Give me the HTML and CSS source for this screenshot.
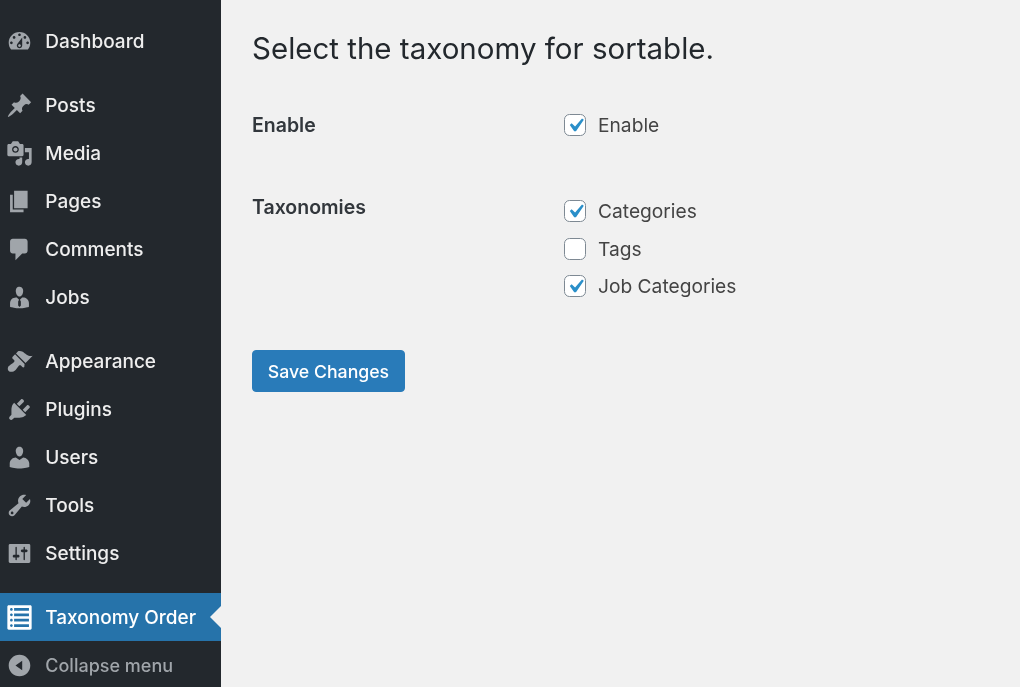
FILE: index.html
```html
<!DOCTYPE html>
<html lang="en">
<head>
<meta charset="utf-8">
<title>Taxonomy Order</title>
<link rel="stylesheet" href="styles.css">
</head>
<body>
<div class="admin">
  <nav class="sidebar">
    <a class="item group-end"><svg class="icon" viewBox="0 0 20 20"><path d="M3.76 16h12.48c1.1-1.37 1.76-3.11 1.76-5 0-4.42-3.58-8-8-8s-8 3.58-8 8c0 1.89.66 3.63 1.76 5zM10 4c.55 0 1 .45 1 1s-.45 1-1 1-1-.45-1-1 .45-1 1-1zM6 6c.55 0 1 .45 1 1s-.45 1-1 1-1-.45-1-1 .45-1 1-1zm8 0c.55 0 1 .45 1 1s-.45 1-1 1-1-.45-1-1 .45-1 1-1zm-5.37 5.55L12 7v6c0 1.1-.9 2-2 2s-2-.9-2-2c0-.57.24-1.08.63-1.45zM4 10c.55 0 1 .45 1 1s-.45 1-1 1-1-.45-1-1 .45-1 1-1zm12 0c.55 0 1 .45 1 1s-.45 1-1 1-1-.45-1-1 .45-1 1-1zm-5 3c0-.55-.45-1-1-1s-1 .45-1 1 .45 1 1 1 1-.45 1-1z"/></svg><span>Dashboard</span></a>
    <a class="item"><svg class="icon" viewBox="0 0 20 20"><path d="M10.44 3.02l1.82-1.82 6.36 6.35-1.83 1.82c-1.05-.68-2.48-.57-3.41.36l-.75.75c-.92.93-1.04 2.35-.35 3.41l-1.83 1.82-2.41-2.41-2.8 2.79c-.42.42-3.38 2.71-3.8 2.29s1.86-3.39 2.28-3.81l2.79-2.79L4.1 9.36l1.83-1.82c1.05.69 2.48.57 3.41-.36l.75-.75c.93-.92 1.05-2.35.35-3.41z"/></svg><span>Posts</span></a>
    <a class="item"><svg class="icon" viewBox="0 0 20 20"><path d="M13 11V4c0-.55-.45-1-1-1h-1.67L9 1H5L3.67 3H2c-.55 0-1 .45-1 1v7c0 .55.45 1 1 1h10c.55 0 1-.45 1-1zM7 4.5c1.38 0 2.5 1.12 2.5 2.5S8.38 9.5 7 9.5 4.5 8.38 4.5 7 5.62 4.5 7 4.5zM14 6h5v10.5c0 1.38-1.12 2.5-2.5 2.5S14 17.88 14 16.5s1.12-2.5 2.5-2.5c.17 0 .34.02.5.05V9h-3V6zm-4 8.05V13h2v3.5c0 1.38-1.12 2.5-2.5 2.5S7 17.88 7 16.5 8.12 14 9.5 14c.17 0 .34.02.5.05z"/><circle cx="7" cy="7" r="1.5"/></svg><span>Media</span></a>
    <a class="item"><svg class="icon" viewBox="0 0 20 20"><path d="M6 15V2h10v13H6zm-1 1h8v2H3V5h2v11z"/></svg><span>Pages</span></a>
    <a class="item"><svg class="icon" viewBox="0 0 20 20"><path d="M5 2h9c1.1 0 2 .9 2 2v7c0 1.1-.9 2-2 2h-2l-5 5v-5H5c-1.1 0-2-.9-2-2V4c0-1.1.9-2 2-2z"/></svg><span>Comments</span></a>
    <a class="item group-end"><svg class="icon" viewBox="0 0 20 20"><path d="M7.3 6l-.03-.19c-.04-.37-.05-.73-.03-1.08.02-.36.1-.71.25-1.04.14-.32.31-.61.52-.86s.49-.46.83-.6c.34-.15.72-.23 1.13-.23.69 0 1.26.2 1.71.59s.76.87.91 1.44.18 1.16.09 1.78l-.03.19c-.01.09-.05.25-.11.48-.05.24-.12.47-.2.69-.08.21-.19.45-.34.72-.14.27-.3.49-.47.69-.18.19-.4.34-.67.48-.27.13-.55.19-.86.19s-.59-.06-.87-.19c-.26-.13-.49-.29-.67-.5-.18-.2-.34-.42-.49-.66-.15-.25-.26-.49-.34-.73-.09-.25-.16-.47-.21-.67-.06-.21-.1-.37-.12-.5zm9.2 6.24c.41.7.5 1.41.5 2.14v2.49c0 .03-.12.08-.29.13-.18.04-.42.13-.97.27-.55.12-1.1.24-1.65.34s-1.19.19-1.95.27c-.75.08-1.46.12-2.13.12-.68 0-1.39-.04-2.14-.12-.75-.07-1.4-.17-1.98-.27-.58-.11-1.08-.23-1.56-.34-.49-.11-.8-.21-1.06-.29L3 16.87v-2.49c0-.75.07-1.46.46-2.15s.81-1.25 1.5-1.68C5.66 10.12 7.19 10 8 10l1.67 1.67L9 13v3l1.02 1.08L11 16v-3l-.68-1.33L11.97 10c.77 0 2.2.07 2.9.52.71.45 1.21 1.02 1.63 1.72z"/></svg><span>Jobs</span></a>
    <a class="item"><svg class="icon" viewBox="0 0 20 20"><path d="M14.48 11.06L7.41 3.99l1.5-1.5c.5-.56 2.3-.47 3.51.32 1.21.8 1.43 1.28 2.91 2.1 1.18.64 2.45 1.26 4.45.85zm-.71.71L6.7 4.7 4.93 6.47c-.39.39-.39 1.02 0 1.41l1.06 1.06c.39.39.39 1.03 0 1.42-.6.6-1.43 1.11-2.21 1.69-.35.26-.7.53-1.01.84C1.43 13.23.78 15.78 2 17s3.77.57 5.12-.77c.31-.31.58-.66.84-1.01.58-.78 1.09-1.61 1.69-2.21.39-.39 1.03-.39 1.42 0l1.06 1.06c.39.39 1.02.39 1.41 0z"/></svg><span>Appearance</span></a>
    <a class="item"><svg class="icon" viewBox="0 0 20 20"><path d="M13.11 4.36L9.87 7.6 8 5.73l3.24-3.24c.35-.34 1.05-.2 1.56.32.52.51.66 1.21.31 1.55zm-8 1.77l.91-1.12 9.01 9.01-1.19.84c-.71.71-2.63 1.16-3.82 1.16H6.14L4.9 17.26c-.59.59-1.54.59-2.12 0-.59-.58-.59-1.53 0-2.12l1.24-1.24v-3.88c0-1.13.4-3.19 1.09-3.89zm7.26 3.97l3.24-3.24c.34-.35 1.04-.21 1.55.31.52.51.66 1.21.31 1.55l-3.24 3.25z"/></svg><span>Plugins</span></a>
    <a class="item"><svg class="icon" viewBox="0 0 20 20"><path d="M10 9.25c-2.27 0-2.73-3.44-2.73-3.44C7 4.02 7.82 2 9.97 2c2.16 0 2.98 2.02 2.71 3.81 0 0-.41 3.44-2.68 3.44zm0 2.57L12.72 10c2.39 0 4.52 2.33 4.52 4.53v2.49s-3.65 1.13-7.24 1.13c-3.65 0-7.24-1.13-7.24-1.13v-2.49c0-2.25 1.94-4.48 4.47-4.48z"/></svg><span>Users</span></a>
    <a class="item"><svg class="icon" viewBox="0 0 20 20"><path d="M16.68 9.77c-1.34 1.34-3.3 1.67-4.95.99l-5.41 6.52c-.99.99-2.59.99-3.58 0s-.99-2.59 0-3.57l6.52-5.42c-.68-1.65-.35-3.61.99-4.95 1.28-1.28 3.12-1.62 4.72-1.06l-2.89 2.89 2.82 2.82 2.86-2.87c.53 1.58.18 3.39-1.08 4.65zM3.81 16.21c.4.39 1.04.39 1.43 0 .4-.4.4-1.04 0-1.43-.39-.4-1.03-.4-1.43 0-.39.39-.39 1.03 0 1.43z"/></svg><span>Tools</span></a>
    <a class="item group-end"><svg class="icon" viewBox="0 0 20 20"><path d="M18 16V4c0-.55-.45-1-1-1H3c-.55 0-1 .45-1 1v12c0 .55.45 1 1 1h14c.55 0 1-.45 1-1zM8 11h1c.55 0 1 .45 1 1s-.45 1-1 1H8v1.5c0 .28-.22.5-.5.5s-.5-.22-.5-.5V13H6c-.55 0-1-.45-1-1s.45-1 1-1h1V5.5c0-.28.22-.5.5-.5s.5.22.5.5V11zm5-2h-1c-.55 0-1-.45-1-1s.45-1 1-1h1V5.5c0-.28.22-.5.5-.5s.5.22.5.5V7h1c.55 0 1 .45 1 1s-.45 1-1 1h-1v5.5c0 .28-.22.5-.5.5s-.5-.22-.5-.5V9z"/></svg><span>Settings</span></a>
    <a class="item current"><svg class="icon" viewBox="0 0 20 20"><path d="M2 19h16c.55 0 1-.45 1-1V2c0-.55-.45-1-1-1H2c-.55 0-1 .45-1 1v16c0 .55.45 1 1 1zM4 3c.55 0 1 .45 1 1s-.45 1-1 1-1-.45-1-1 .45-1 1-1zm13 0v2H6V3h11zM4 7c.55 0 1 .45 1 1s-.45 1-1 1-1-.45-1-1 .45-1 1-1zm13 0v2H6V7h11zM4 11c.55 0 1 .45 1 1s-.45 1-1 1-1-.45-1-1 .45-1 1-1zm13 0v2H6v-2h11zM4 15c.55 0 1 .45 1 1s-.45 1-1 1-1-.45-1-1 .45-1 1-1zm13 0v2H6v-2h11z"/></svg><span>Taxonomy Order</span></a>
    <a class="item collapse"><svg class="icon" viewBox="0 0 20 20"><path fill-rule="evenodd" d="M18 10c0-4.42-3.58-8-8-8s-8 3.58-8 8 3.58 8 8 8 8-3.58 8-8zm-6 3.5L7 10l5-3.5v7z"/></svg><span>Collapse menu</span></a>
  </nav>
  <main class="content">
    <h1 class="title">Select the taxonomy for sortable.</h1>
    <form class="form">
      <div class="row row-enable">
        <div class="label">Enable</div>
        <div class="field">
          <label class="check"><span class="box checked"><svg viewBox="0 0 20 20"><path d="M14.83 4.89l1.34.94-5.81 8.38H9.02L5.78 9.67l1.34-1.25 2.57 2.4z"/></svg></span>Enable</label>
        </div>
      </div>
      <div class="row row-tax">
        <div class="label">Taxonomies</div>
        <div class="field">
          <label class="check"><span class="box checked"><svg viewBox="0 0 20 20"><path d="M14.83 4.89l1.34.94-5.81 8.38H9.02L5.78 9.67l1.34-1.25 2.57 2.4z"/></svg></span>Categories</label>
          <label class="check"><span class="box"></span>Tags</label>
          <label class="check"><span class="box checked"><svg viewBox="0 0 20 20"><path d="M14.83 4.89l1.34.94-5.81 8.38H9.02L5.78 9.67l1.34-1.25 2.57 2.4z"/></svg></span>Job Categories</label>
        </div>
      </div>
      <button class="save" type="button">Save Changes</button>
    </form>
  </main>
</div>
</body>
</html>
```
FILE: styles.css
```css
* { box-sizing: border-box; }
html, body { margin: 0; height: 100%; }
body {
  background: #f1f1f1;
  font-family: Inter, "Noto Sans", "Liberation Sans", sans-serif;
  overflow: hidden;
}
.admin { display: flex; height: 687px; filter: blur(0.35px); }
.sidebar {
  width: 221px;
  flex: none;
  background: #23282d;
  padding-top: 17px;
  display: flex;
  flex-direction: column;
}
.item {
  height: 48px;
  flex: none;
  display: flex;
  align-items: center;
  gap: 12.3px;
  padding-left: 6px;
  color: #eee;
  font-size: 19px;
  font-weight: 500;
  position: relative;
}
.group-end { margin-bottom: 16px; }
.icon { width: 27px; height: 27px; fill: #a0a5aa; flex: none; }
.current { background: #2673aa; color: #fff; }
.current .icon { fill: #fff; }
.current::after {
  content: "";
  position: absolute;
  right: 0;
  top: 50%;
  margin-top: -11px;
  border: 11px solid transparent;
  border-left: 0;
  border-right-color: #f1f1f1;
}
.collapse { color: #a0a5aa; font-size: 18px; }
.content { flex: 1; padding: 30px 0 0 31px; color: #32373c; }
.title { margin: 0; font-size: 29.5px; font-weight: 400; line-height: 36px; color: #23282d; }
.form { margin: 0; }
.row { display: grid; grid-template-columns: 312px 1fr; }
.row-enable { margin-top: 41px; height: 82px; }
.label { font-weight: 600; font-size: 19.5px; line-height: 36px; }
.field { display: flex; flex-direction: column; color: #444; font-size: 19.2px; }
.row-tax { height: 161px; }
.row-tax .field { padding-top: 4px; gap: 1.5px; }
.check { display: flex; align-items: center; gap: 12px; height: 36px; }
.box {
  width: 22px; height: 22px; flex: none;
  background: #fff;
  border: 1.5px solid #7e8993;
  border-radius: 5.5px;
  display: flex; align-items: center; justify-content: center;
}
.box svg { width: 27px; height: 27px; fill: #2a8fc9; flex: none; }
.save {
  display: block;
  width: 153px;
  height: 42px;
  padding: 0;
  border: 1px solid #297bb9;
  border-radius: 4px;
  background: #297bb9;
  color: #fff;
  font: 500 17.7px Inter, "Noto Sans", sans-serif;
}
```
